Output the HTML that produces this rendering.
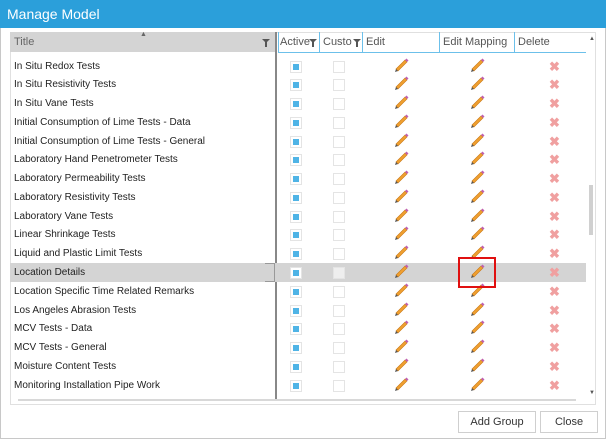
<!DOCTYPE html><html><head><style>
body{margin:0;width:606px;height:439px;background:#fff;font-family:"Liberation Sans",sans-serif;position:relative;overflow:hidden}
.a{position:absolute}
.tb{left:0;top:0;width:606px;height:28px;background:#2b9fda;color:#fff;font-size:14px;line-height:28px;padding-left:7px;box-sizing:border-box}
.frame{left:0;top:28px;width:604px;height:410px;border:1px solid #c8c8c8;border-top:none}
.hdr{top:32px;height:20px;font-size:11px;color:#555;line-height:20px;border-bottom:1px solid #6cc0ea}
.row{left:10px;width:576px;height:19px;font-size:10px;color:#222;line-height:19px}
.row span{position:absolute;left:4px}
.chk{position:absolute;width:10px;height:10px;border:1px solid #e4e4e4;top:4px;background:#fff}
.chk.on::after{content:"";position:absolute;left:2px;top:2px;width:6px;height:6px;background:#4fb4e6}
.pen{position:absolute;top:-1px}
.x{position:absolute;left:539px;top:0;color:#f0a0a0;font-size:13px;font-weight:bold}
.btn{top:411px;height:20px;border:1px solid #cfcfcf;font-size:11px;line-height:20px;text-align:center;color:#333;background:#fff}
.fl{position:absolute;top:7px;width:0;height:0;border-left:4px solid transparent;border-right:4px solid transparent;border-top:4px solid #555}
.fl::after{content:"";position:absolute;left:-1px;top:-1px;width:2px;height:5px;background:#555}
</style></head><body>
<div class="a tb">Manage Model</div>
<div class="a frame"></div>
<div class="a" style="left:10px;top:32px;width:586px;height:373px;border:1px solid #e0e0e0;box-sizing:border-box"></div>
<div class="a hdr" style="left:10px;width:265px;background:#d4d4d4;padding-left:4px;box-sizing:border-box;color:#666;border-bottom:none">Title<span style="position:absolute;left:130px;top:-7px;font-size:7px">▲</span><span class="fl" style="left:252px"></span></div>
<div class="a" style="left:275px;top:32px;width:2px;height:368px;background:#888"></div>
<div class="a" style="left:278px;top:32px;width:1px;height:21px;background:#6cc0ea"></div>
<div class="a hdr" style="left:279px;width:307px"></div>
<div class="a hdr" style="left:278px;border:none;padding-left:2px">Active</div>
<div class="a hdr" style="left:308px;border:none;width:10px"><span class="fl" style="left:1px"></span></div>
<div class="a" style="left:319px;top:32px;width:1px;height:21px;background:#6cc0ea"></div>
<div class="a hdr" style="left:323px;border:none">Custo</div>
<div class="a hdr" style="left:352px;border:none;width:10px"><span class="fl" style="left:1px"></span></div>
<div class="a" style="left:362px;top:32px;width:1px;height:21px;background:#6cc0ea"></div>
<div class="a hdr" style="left:366px;border:none">Edit</div>
<div class="a" style="left:439px;top:32px;width:1px;height:21px;background:#6cc0ea"></div>
<div class="a hdr" style="left:443px;border:none">Edit Mapping</div>
<div class="a" style="left:514px;top:32px;width:1px;height:21px;background:#6cc0ea"></div>
<div class="a hdr" style="left:518px;border:none">Delete</div>
<div class="a" style="left:589px;top:36px;font-size:6px;color:#555">▲</div>
<div class="a" style="left:589px;top:185px;width:4px;height:50px;background:#d0d0d0"></div>
<div class="a" style="left:589px;top:390px;font-size:6px;color:#555">▼</div>
<div class="a" style="left:18px;top:399px;width:558px;height:2px;background:#d8d8d8"></div>
<svg width="0" height="0" style="position:absolute"><defs><g id="p"><path d="M2 13 L11 4 L13 6 L4 15 Z" fill="#f0a030" stroke="#c87818" stroke-width="0.6"/><path d="M11 4 L12.5 2.5 L14.5 4.5 L13 6Z" fill="#c060b0"/><path d="M2 13 L4 15 L1 16Z" fill="#555"/></g></defs></svg>
<div id="rows"></div>
<script>
var t=["In Situ Redox Tests","In Situ Resistivity Tests","In Situ Vane Tests","Initial Consumption of Lime Tests - Data","Initial Consumption of Lime Tests - General","Laboratory Hand Penetrometer Tests","Laboratory Permeability Tests","Laboratory Resistivity Tests","Laboratory Vane Tests","Linear Shrinkage Tests","Liquid and Plastic Limit Tests","Location Details","Location Specific Time Related Remarks","Los Angeles Abrasion Tests","MCV Tests - Data","MCV Tests - General","Moisture Content Tests","Monitoring Installation Pipe Work"];
var h="";t.forEach(function(s,i){var y=56.5+i*18.77;var sel=i==11;
h+='<div class="a row" style="top:'+y+'px;'+(sel?'background:#d4d4d4;':'')+'"><span>'+s+'</span>'+
'<div class="chk on" style="left:280px"></div><div class="chk" style="left:323px;'+(sel?'background:#eee;':'')+'"></div>'+
'<svg class="pen" style="left:384px" width="16" height="17"><use href="#p"/></svg>'+
'<svg class="pen" style="left:460px" width="16" height="17"><use href="#p"/></svg>'+
'<div class="x">✖</div></div>';});
document.getElementById("rows").innerHTML=h;
</script>
<div class="a" style="left:265px;top:263px;width:10px;height:19px;background:#d4d4d4;border:1px solid #999;border-left:none;box-sizing:border-box"></div>
<div class="a" style="left:458px;top:257px;width:38px;height:31px;border:2px solid #e01010;box-sizing:border-box"></div>
<div class="a btn" style="left:458px;width:76px">Add Group</div>
<div class="a btn" style="left:540px;width:56px">Close</div>
</body></html>
